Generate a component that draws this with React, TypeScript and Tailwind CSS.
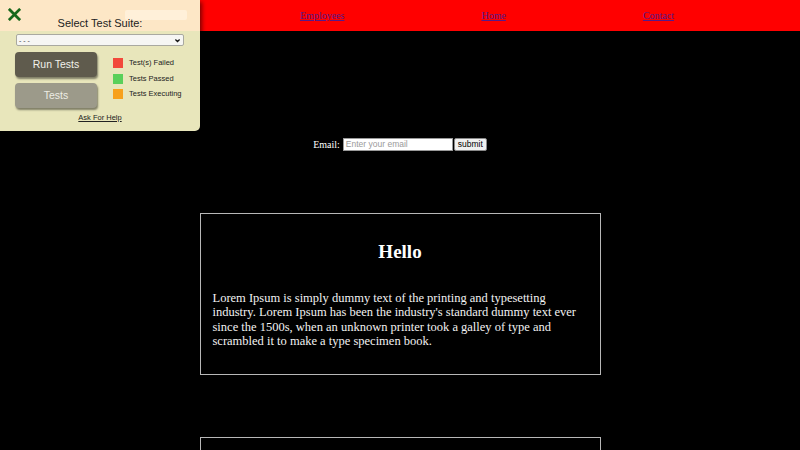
import React from 'react';

const navLinks = ['Employees', 'Home', 'Contact'];

const legend = [
  { label: 'Test(s) Failed', color: 'bg-[#f2493b]' },
  { label: 'Tests Passed', color: 'bg-[#5ad05a]' },
  { label: 'Tests Executing', color: 'bg-[#f7a11c]' },
];

const TestPanel = () => (
  <div className="absolute left-0 top-0 w-[200px] h-[131px] rounded-br-[5px] bg-[linear-gradient(to_bottom,#fde7c6_31px,#e8e6bb_31px)] shadow-[2px_2px_4px_rgba(0,0,0,0.5)] font-['Liberation_Sans',Arial,sans-serif] text-[#222]">
    {/* close */}
    <button className="absolute left-[8px] top-[8px] w-[13px] h-[13px]" aria-label="Close">
      <svg viewBox="0 0 13 13" className="w-[13px] h-[13px]">
        <path d="M1.8 1.8L11.2 11.2M11.2 1.8L1.8 11.2" stroke="#17671b" strokeWidth="2.7" strokeLinecap="square" />
      </svg>
    </button>
    <div className="absolute left-[125px] top-[10px] w-[62px] h-[10px] bg-[#fff0d9] rounded-[2px]" />

    <div className="relative pt-[17px] text-center text-[11px] leading-[13px]">Select Test Suite:</div>

    <div className="relative mx-[16px] mt-[4px] h-[12px] flex items-center justify-between bg-[#f6f6f3] border border-[#a9a9a0] rounded-[2px] px-[2px]">
      <span className="text-[7px] leading-none text-[#444]">- - -</span>
      <svg viewBox="0 0 10 10" className="w-[7px] h-[7px]">
        <path d="M2 3.5L5 6.5L8 3.5" stroke="#111" strokeWidth="1.8" fill="none" />
      </svg>
    </div>

    <div className="flex mt-[6px] pl-[15px]">
      <div className="flex flex-col gap-[6px] w-[82px]">
        <button className="h-[25px] rounded-[4px] bg-[#5f5b4d] text-[#f1f1ea] text-[10.5px] shadow-[1px_2px_2px_rgba(0,0,0,0.45)]">
          Run Tests
        </button>
        <button className="h-[25px] rounded-[4px] bg-[#9c9a8a] text-[#ececE4] text-[10.5px] shadow-[1px_2px_2px_rgba(0,0,0,0.45)]">
          Tests
        </button>
      </div>
      <div className="flex flex-col gap-[5.5px] pt-[6px] pl-[16px]">
        {legend.map((l) => (
          <div key={l.label} className="flex items-center gap-[6px] h-[10px]">
            <span className={`w-[10px] h-[10px] ${l.color}`} />
            <span className="text-[7.5px] leading-none">{l.label}</span>
          </div>
        ))}
      </div>
    </div>

    <div className="text-center mt-[5px] text-[7.5px] leading-[10px] underline">Ask For Help</div>
  </div>
);

export default function App() {
  return (
    <div className="relative w-full min-h-[450px] h-[450px] overflow-hidden bg-black font-['Liberation_Serif','Times_New_Roman',serif]">
      <nav className="h-[31px] bg-[#ff0000] flex items-center pl-[300px] gap-[137px] pt-[1px]">
        {navLinks.map((n) => (
          <a key={n} href="#" className="text-[10px] leading-none text-[#551a8b] underline">
            {n}
          </a>
        ))}
      </nav>

      <main>
        <div className="flex items-center justify-center pt-[107px] h-[120px]">
          <label className="text-white text-[10px] mr-[3px]">Email:</label>
          <div className="w-[110px] h-[13px] bg-white border border-[#999] flex items-center px-[2px]">
            <span className="text-[8.5px] text-[#9a9a9a] font-['Liberation_Sans',Arial,sans-serif] leading-none">Enter your email</span>
          </div>
          <button className="ml-[1px] w-[33px] h-[13px] bg-[#f0f0f0] border border-[#888] rounded-[2px] text-[8.5px] text-black leading-none font-['Liberation_Sans',Arial,sans-serif]">
            submit
          </button>
        </div>

        <section className="w-[401px] mx-auto mt-[62px] h-[162px] border border-[#b8b8b8] text-white px-[12px]">
          <h1 className="text-center font-bold text-[19px] leading-[22px] pt-[27px]">Hello</h1>
          <p className="text-[12.5px] leading-[14.4px] mt-[28px] text-[#f2f2f2]">
            Lorem Ipsum is simply dummy text of the printing and typesetting industry. Lorem Ipsum has been the
            industry's standard dummy text ever since the 1500s, when an unknown printer took a galley of type and
            scrambled it to make a type specimen book.
          </p>
        </section>

        <section className="w-[401px] mx-auto mt-[62px] h-[162px] border border-[#b8b8b8]" />
      </main>

      <TestPanel />
    </div>
  );
}
